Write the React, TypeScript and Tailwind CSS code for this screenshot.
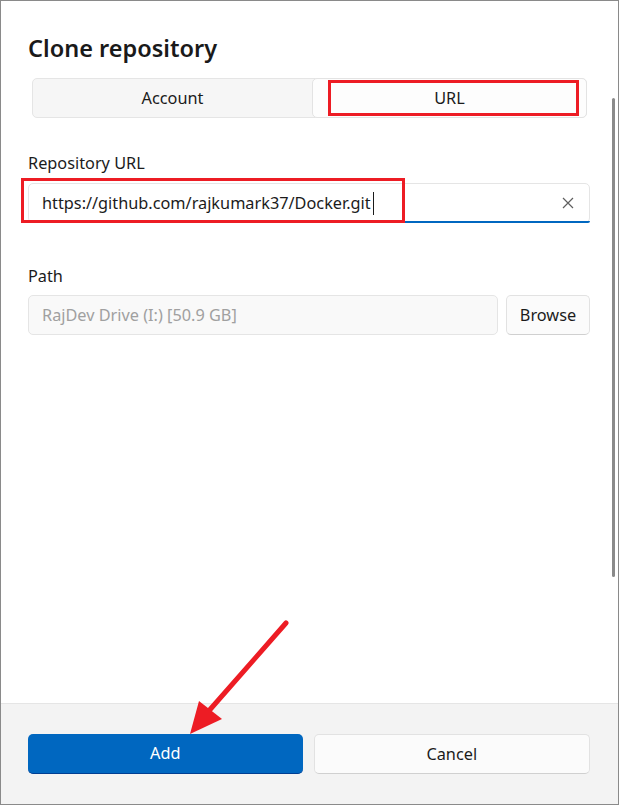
import React from "react";

export default function App() {
  return (
    <div
      className="relative w-[619px] h-[805px] border border-[#8a8a8a] bg-white flex flex-col text-[#1b1b1b] overflow-hidden"
      style={{ fontFamily: '"Noto Sans", "Open Sans", sans-serif' }}
    >
      <div className="relative flex-1 flex flex-col pl-[27px] pr-[28px]">
        <h1 className="mt-[31px] text-[23.5px] leading-[32px] font-semibold text-[#1a1a1a]">
          Clone repository
        </h1>

        <div className="mt-[14px] ml-[4px] mr-[3px] h-[40px] flex rounded-[5px] border border-[#e5e5e5] bg-[#f6f6f6]">
          <div className="w-[279px] flex items-center justify-center text-[16.3px]">
            Account
          </div>
          <div className="relative flex-1 -my-px -mr-px flex items-center justify-center rounded-[5px] border border-[#e3e3e3] bg-[#fdfdfd] text-[16.3px]">
            URL
            <div className="absolute left-[15px] right-[7px] top-[1px] bottom-[1px] border-[3px] border-[#ed1c24]" />
          </div>
        </div>

        <div className="mt-[34px] text-[16.3px] leading-[22px]">Repository URL</div>

        <div className="relative mt-[9px] h-[40px] flex items-center rounded-[5px] border border-[#e5e5e5] bg-white pl-[13px] pr-[14px]">
          <span className="text-[16.3px] text-[#1b1b1b]">
            https://github.com/rajkumark37/Docker.git
          </span>
          <span className="ml-[2px] w-px h-[23px] bg-[#1b1b1b]" />
          <span className="flex-1" />
          <svg width="12" height="12" viewBox="0 0 12 12" className="mr-[1px]">
            <path d="M1 1 L11 11 M11 1 L1 11" stroke="#5f5f5f" strokeWidth="1.2" fill="none" />
          </svg>
          <div className="absolute left-[-1px] right-[-1px] -bottom-px h-[2px] rounded-b-[5px] bg-[#0067c0]" />
          <div className="absolute left-[-8px] top-[-6px] w-[384px] h-[45px] border-[3px] border-[#ed1c24]" />
        </div>

        <div className="mt-[42px] text-[16.3px] leading-[22px]">Path</div>

        <div className="mt-[8px] h-[40px] flex gap-[8px]">
          <div className="flex-1 flex items-center rounded-[5px] border border-[#e5e5e5] bg-[#f9f9f9] pl-[13px] text-[16.3px] text-[#a0a0a0]">
            RajDev Drive (I:) [50.9 GB]
          </div>
          <div className="w-[84px] flex items-center justify-center rounded-[5px] border border-[#e2e2e2] border-b-[#d0d0d0] bg-[#fbfbfb] text-[16.3px]">
            Browse
          </div>
        </div>

        <div className="absolute left-[611px] top-[97px] w-[3px] h-[479px] rounded-full bg-[#8a8a8a]" />
      </div>

      <div className="h-[101px] border-t border-[#e5e5e5] bg-[#f3f3f3] pl-[27px] pr-[28px] pt-[30px] flex gap-[11px]">
        <div className="flex-1 h-[40px] flex items-center justify-center rounded-[5px] bg-[#0067c0] border-b border-[#003e92] text-white text-[16.3px]">
          Add
        </div>
        <div className="flex-1 h-[40px] flex items-center justify-center rounded-[5px] border border-[#e2e2e2] border-b-[#d0d0d0] bg-[#fbfbfb] text-[16.3px]">
          Cancel
        </div>
      </div>

      <svg
        className="absolute left-0 top-0 pointer-events-none"
        width="619"
        height="805"
        viewBox="0 0 619 805"
      >
        <line x1="285" y1="622" x2="206" y2="712" stroke="#ed1c24" strokeWidth="5" strokeLinecap="round" />
        <polygon points="189,733 198,700 221,718" fill="#ed1c24" />
      </svg>
    </div>
  );
}
